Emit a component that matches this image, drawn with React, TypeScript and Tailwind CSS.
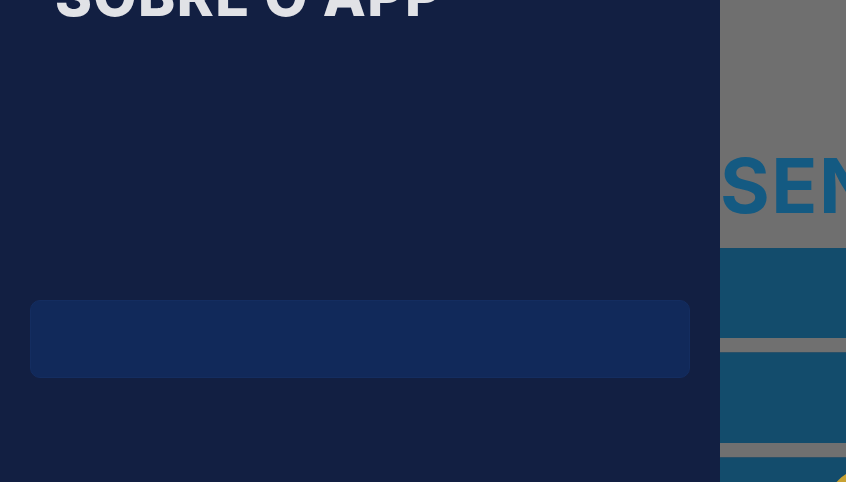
import React from "react";

const Drawer: React.FC = () => {
  return (
    <aside className="w-[720px] shrink-0 h-full bg-[#121f42] px-[30px] overflow-hidden">
      <h1
        className="-mt-[32px] pl-[25px] text-[56px] leading-none font-extrabold tracking-[0.025em] text-[#e1e2e6]"
        style={{ fontFamily: "Inter, 'Liberation Sans', sans-serif" }}
      >
        SOBRE O APP
      </h1>
      <div className="mt-[276px] h-[78px] rounded-[10px] bg-[#11295a] border border-[#142d60]" />
    </aside>
  );
};

const Backdrop: React.FC = () => {
  return (
    <main className="flex-1 h-full overflow-hidden bg-[#6f6f6f] flex flex-col">
      <div className="h-[248px] shrink-0 flex items-end pb-[25px]">
        <span
          className="block whitespace-nowrap text-[76px] leading-none font-bold tracking-[0.02em] text-[#145a82]"
          style={{ fontFamily: "Inter, 'Liberation Sans', sans-serif" }}
        >
          SENHA
        </span>
      </div>
      <div className="h-[90px] shrink-0 bg-[#134c6c]" />
      <div className="h-[15px] shrink-0 bg-[#707070] border-b border-[#2a5068]" />
      <div className="h-[90px] shrink-0 bg-[#134c6c]" />
      <div className="h-[15px] shrink-0 bg-[#707070] border-b border-[#2a5068]" />
      <div className="relative flex-1 bg-[#134c6c] overflow-hidden">
        <div className="absolute left-[107px] top-[10px] w-[80px] h-[80px] rounded-full bg-[#c7a233]" />
      </div>
    </main>
  );
};

export default function App() {
  return (
    <div className="flex w-[846px] h-[482px] overflow-hidden">
      <Drawer />
      <Backdrop />
    </div>
  );
}
